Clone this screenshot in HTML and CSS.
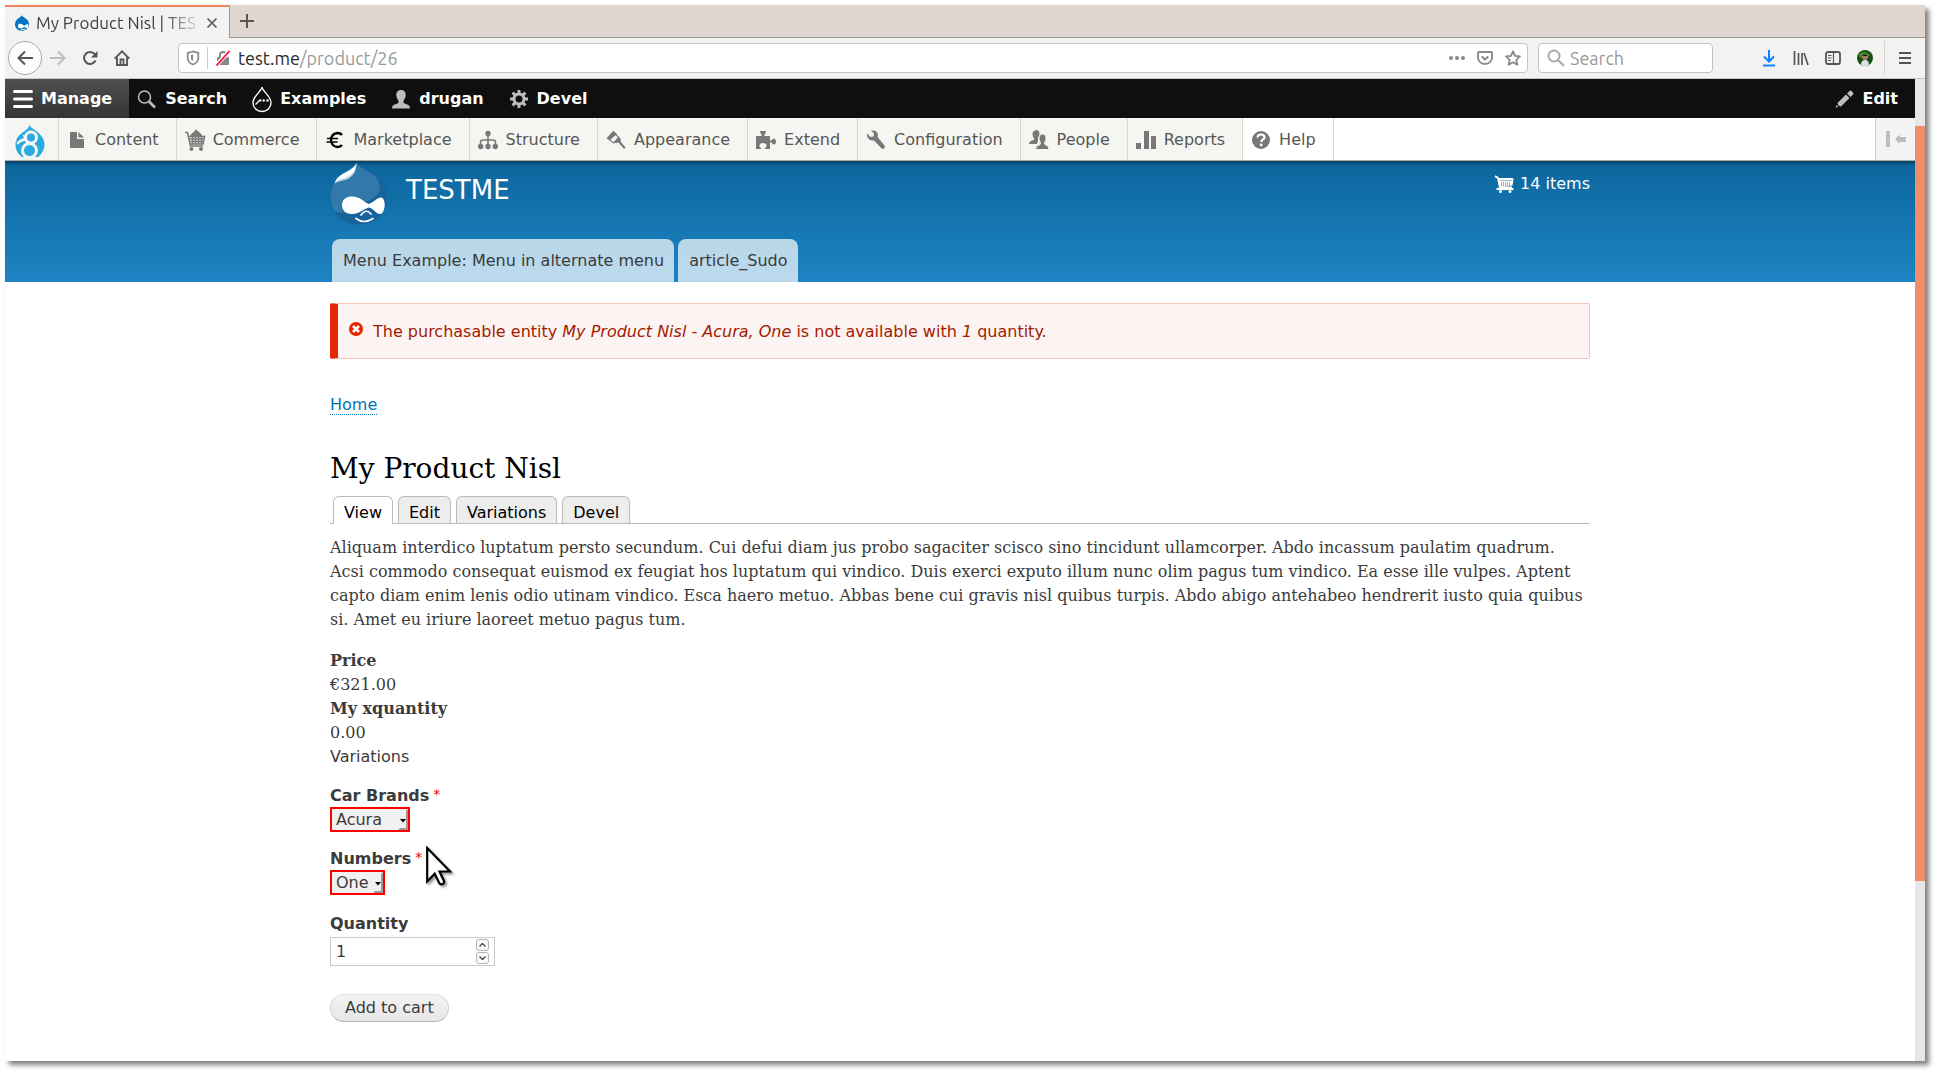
FILE: index.html
```html
<!DOCTYPE html>
<html lang="en">
<head>
  <meta charset="UTF-8">
  <title>My Product Nisl | TESTME</title>
  <meta name="viewport" content="width=device-width, initial-scale=1">
  <link rel="stylesheet" href="styles.css">
</head>
<body>
  <div class="window">

    <!-- browser tabs -->
    <div class="tabstrip">
      <div class="browser-tab">
        <svg class="favicon" width="14" height="16" viewBox="0 0 57 64"><path d="M27 0C31 7 42 10 49 18C55 25 57 31 57 37C57 52 44 64 28 64C12 64 0 52 0 37C0 26 7 18 15 12C21 8 25 5 27 0Z" fill="#0077c0"/><path d="M12 44c0-7 5-9 9-9 8 0 12 6 17 8 5-1 9-8 13-7s5 16 0 17-8-5-12-5-9 6-17 6c-6 0-10-4-10-10z" fill="#fff"/><path d="M24 57q8 5 18-1" fill="none" stroke="#fff" stroke-width="4"/></svg>
        <span class="tab-title">My Product Nisl | TES</span>
        <button class="plain" aria-label="Close tab"><svg width="12" height="12" viewBox="0 0 12 12"><path d="M1.500 1.500l9 9M10.500 1.500l-9 9" stroke="#555" stroke-width="1.600"/></svg></button>
      </div>
      <button class="plain new-tab" aria-label="New tab"><svg width="14" height="14" viewBox="0 0 14 14"><path d="M7 0v14M0 7h14" stroke="#5a5654" stroke-width="2"/></svg></button>
    </div>

    <!-- browser navigation -->
    <div class="navbar">
      <button class="plain back" aria-label="Back"><svg width="16" height="16" viewBox="0 0 16 16"><path d="M16 8H1.500M8 1.500L1.500 8 8 14.500" fill="none" stroke="#555" stroke-width="2"/></svg></button>
      <button class="plain nav-icon" aria-label="Forward"><svg width="16" height="16" viewBox="0 0 16 16"><path d="M0 8h14.500M8 1.500L14.500 8 8 14.500" fill="none" stroke="#bbb" stroke-width="2"/></svg></button>
      <button class="plain nav-icon" aria-label="Reload"><svg width="16" height="16" viewBox="0 0 16 16"><path d="M13 4.500A6 6 0 1 0 13.500 10.500" fill="none" stroke="#555" stroke-width="2"/><path d="M15.500 1v6.500H9z" fill="#555"/></svg></button>
      <button class="plain nav-icon" aria-label="Home"><svg width="16" height="16" viewBox="0 0 16 16"><path d="M0.700 8.700L8 1.400l7.300 7.300M3 7.500V15h10V7.500" fill="none" stroke="#555" stroke-width="1.900"/><path d="M6.500 14V9.500h3V14" fill="none" stroke="#555" stroke-width="1.800"/></svg></button>

      <div class="urlbar">
        <svg width="14" height="16" viewBox="0 0 14 16"><path d="M7 1.500L1.700 2.800V8c0 3.500 2.500 5.500 5.300 6.500 2.800-1 5.300-3 5.300-6.500V2.800z" fill="none" stroke="#888" stroke-width="1.700"/><path d="M7 4.500L5 5v3c0 1.500.8 2.500 2 3z" fill="#888"/></svg>
        <span class="url-sep"></span>
        <svg width="16" height="16" viewBox="0 0 16 16"><path d="M5 8V5a3 3 0 0 1 6 0v3" fill="none" stroke="#888" stroke-width="2"/><rect x="2" y="7" width="12" height="8" rx="1" fill="#888"/><path d="M1.500 15L14.500 1" stroke="#fff" stroke-width="4"/><path d="M1.500 15.500L14.500 1" stroke="#ff0f3f" stroke-width="1.800"/></svg>
        <span class="url"><b>test.me</b>/product/26</span>
        <svg width="16" height="16" viewBox="0 0 16 16"><g fill="#888"><circle cx="2" cy="8" r="2"/><circle cx="8" cy="8" r="2"/><circle cx="14" cy="8" r="2"/></g></svg>
        <svg width="16" height="16" viewBox="0 0 16 16"><path d="M2 2h12a1 1 0 0 1 1 1v4.500a7 6.500 0 0 1-14 0V3a1 1 0 0 1 1-1z" fill="none" stroke="#888" stroke-width="1.900"/><path d="M4.700 6.500L8 9.500l3.300-3" fill="none" stroke="#888" stroke-width="1.900"/></svg>
        <svg width="16" height="16" viewBox="0 0 16 16"><path d="M8 1.300l2 4.600 5 .5-3.700 3.400 1 4.900L8 12.200l-4.300 2.500 1-4.900L1 6.400l5-.5z" fill="none" stroke="#888" stroke-width="1.800" stroke-linejoin="round"/></svg>
      </div>

      <div class="searchbar">
        <svg width="18" height="18" viewBox="0 0 18 18"><circle cx="7" cy="7" r="5.500" fill="none" stroke="#aaa" stroke-width="2"/><path d="M11 11l6 6" stroke="#aaa" stroke-width="2.200"/></svg>
        <input type="text" placeholder="Search" aria-label="Search the web">
      </div>

      <div class="chrome-tools">
        <svg width="16" height="18" viewBox="0 0 16 18"><path d="M8 1v11M3 7.500l5 5 5-5M2 16.500h12" fill="none" stroke="#0a84ff" stroke-width="2"/></svg>
        <svg width="16" height="16" viewBox="0 0 16 16"><path d="M1.500 1v14M5.500 3v12M9 3v12M11 3l4 12" fill="none" stroke="#555" stroke-width="1.700"/></svg>
        <svg width="16" height="16" viewBox="0 0 16 16"><rect x="1" y="2" width="14" height="12" rx="2" fill="none" stroke="#555" stroke-width="1.800"/><path d="M8.500 2v12M3 5.500h3.500M3 8h3.500M3 10.500h3" stroke="#555" stroke-width="1.200"/></svg>
        <svg width="16" height="16" viewBox="0 0 16 16"><circle cx="8" cy="8" r="8" fill="#174f14"/><path d="M1 5q3-4 7-3t5 4l-4 1-5 1z" fill="#3e8a20"/><circle cx="8" cy="7" r="3" fill="#a77a66"/><path d="M5.300 6a3 3 0 0 1 5.400 0z" fill="#1f1612"/><path d="M4 14.900q0-4.900 4-4.900t4 4.900q-4 2-8 0z" fill="#d7e3f0"/></svg>
      </div>
      <button class="plain app-menu" aria-label="Menu"><svg width="12" height="12" viewBox="0 0 12 12"><path d="M0 1h12M0 6h12M0 11h12" stroke="#555" stroke-width="2"/></svg></button>
    </div>

    <div class="viewport">
      <div class="page">

        <!-- admin toolbar -->
        <nav class="toolbar-bar">
          <a class="bar-item active" href="#"><svg width="20" height="18" viewBox="0 0 20 18"><path d="M1.500 1.500h17M1.500 9h17M1.500 16.500h17" stroke="#fff" stroke-width="3" stroke-linecap="round"/></svg>Manage</a>
          <a class="bar-item" href="#"><svg width="20" height="20" viewBox="0 0 20 20"><circle cx="7.500" cy="8" r="6" fill="none" stroke="#bebebe" stroke-width="1.500"/><path d="M12 12.500l6 6" stroke="#bebebe" stroke-width="2.600"/></svg>Search</a>
          <a class="bar-item" href="#"><svg width="22" height="28" viewBox="0 0 22 28"><path d="M11 2c0 4-9 9-9 15.500C2 23 6 26.500 11 26.500s9-3.500 9-9C20 11 11 6 11 2z" fill="none" stroke="#fff" stroke-width="1.400"/><path d="M4.500 19.500l5-5" stroke="#fff" stroke-width="1.200"/><circle cx="9.500" cy="15.500" r="1" fill="#fff"/><circle cx="12.700" cy="15.500" r="1.200" fill="#fff"/><circle cx="16.500" cy="15.500" r="1.200" fill="#fff"/></svg>Examples</a>
          <a class="bar-item" href="#"><svg width="20" height="20" viewBox="0 0 20 20"><path d="M10 1c3.500 0 5 2.500 4.600 6-.3 2.500-1.800 4-2.200 5.200-.3 1 .3 2 1.600 2.500 3.200 1 4.800 1.500 5 4.800H1c.2-3.300 1.800-3.800 5-4.800 1.300-.5 1.900-1.500 1.600-2.500C7.200 11 5.700 9.500 5.400 7 5 3.500 6.500 1 10 1z" fill="#bebebe"/></svg>drugan</a>
          <a class="bar-item" href="#"><svg width="20" height="20" viewBox="0 0 20 20"><circle cx="10" cy="10" r="5" fill="none" stroke="#bebebe" stroke-width="3"/><path d="M10 1v4M10 15v4M1 10h4M15 10h4M3.600 3.600l3 3M13.400 13.400l3 3M3.600 16.400l3-3M13.400 6.600l3-3" stroke="#bebebe" stroke-width="3"/></svg>Devel</a>
          <a class="bar-item edit" href="#"><svg width="20" height="20" viewBox="0 0 20 20"><path d="M1.500 18.500l1-2.500 2 2zM3.500 14L12 5.500l3.500 3.500L7 17.500l-2.500-1zM13 4.500L15.500 2q1-1 2 0L19 3.500q1 1 0 2L16.500 8z" fill="#bebebe"/></svg>Edit</a>
        </nav>

        <nav class="toolbar-tray">
          <a class="tray-item home" href="#" aria-label="Drupal"><svg width="30" height="32" viewBox="0 0 30 32"><clipPath id="drop"><path d="M14.500 0c1 3 5.500 4.500 9.500 8.500 4 4 5.500 7 5.500 11 0 5-3 10-6.500 12.500H7C3 29 .5 25 .5 19.500c0-5 2.500-8.500 6.500-11.500C10 5.500 13.500 4 14.500 0z"/></clipPath><g clip-path="url(#drop)"><rect width="30" height="32" fill="#2ba9e0"/><path d="M1 14q3-4 8-4l3 6q-7 0-9 4-2-2-2-6z" fill="#f5f6f1"/><circle cx="16" cy="12.500" r="5.500" fill="none" stroke="#f5f6f1" stroke-width="3"/><circle cx="14.500" cy="25.500" r="7" fill="none" stroke="#f5f6f1" stroke-width="3"/><path d="M1 14q1-4 6-5l2 4q-5 1-7 5z" fill="#2ba9e0"/></g></svg></a>
          <a class="tray-item" href="#"><svg width="20" height="20" viewBox="0 0 20 20"><path d="M3 2h7v7h7v9H3zM11.500 2L17 7.500h-5.500z" fill="#787878"/></svg>Content</a>
          <a class="tray-item" href="#"><svg width="20" height="22" viewBox="0 0 20 22"><path d="M11 0c1 2.500 6 3.500 6.500 8H5C5.500 4 10 3 11 0z" fill="#787878"/><path d="M0 3.500h2.500L5.500 17H18M3 7.500h16.500L18 15H5" fill="none" stroke="#787878" stroke-width="1.600"/><path d="M5 10h13.500M5.500 12.500h13M7.500 8v7M10.500 8v7M13.500 8v7M16.500 8v7" stroke="#787878" stroke-width="1.400"/><circle cx="6.500" cy="20" r="2" fill="#787878"/><circle cx="16" cy="20" r="2" fill="#787878"/></svg>Commerce</a>
          <a class="tray-item" href="#"><svg width="20" height="20" viewBox="0 0 20 20"><path d="M17 5Q15.500 3 12.500 3 6.500 3.500 6 10q.5 6.500 6.500 7 3 0 4.500-2" fill="none" stroke="#000" stroke-width="2.300"/><path d="M2 8.500h11M1.500 12h11" stroke="#000" stroke-width="1.700"/></svg>Marketplace</a>
          <a class="tray-item" href="#"><svg width="20" height="20" viewBox="0 0 20 20"><path d="M10 4v12M2.500 16v-3.500Q2.500 10 5 10h10q2.500 0 2.500 2.500V16" fill="none" stroke="#787878" stroke-width="1.600"/><g fill="#787878"><circle cx="10" cy="3.500" r="2.700"/><circle cx="2.700" cy="16.500" r="2.700"/><circle cx="10" cy="16.500" r="2.700"/><circle cx="17.300" cy="16.500" r="2.700"/></g></svg>Structure</a>
          <a class="tray-item" href="#"><svg width="20" height="20" viewBox="0 0 20 20"><path d="M7 2L1.500 8.500 8 13l5-5.500z" fill="none" stroke="#787878" stroke-width="1.200"/><path d="M7.500 1L1 8l3 2 7-6zM12 7l-4 5 2.500 1 2-.5 5.500 6.500 1.500-1.500-5-6 .5-2.500z" fill="#787878"/></svg>Appearance</a>
          <a class="tray-item" href="#"><svg width="22" height="20" viewBox="0 0 22 20"><path d="M1 6h5.500V4.500Q5 3.500 5 1h6q0 2.500-1.500 3.500V6H15v4.500h1.500q1-2 2.500-2 2 .5 2 3t-2 3q-1.500 0-2.500-2H15V19h-5v-1q2-1 1.500-3T8 13t-3.500 2T6 18v1H1z" fill="#787878"/></svg>Extend</a>
          <a class="tray-item" href="#"><svg width="20" height="20" viewBox="0 0 20 20"><path d="M1 3.500L4.500 7l3-.5.5-3L5 .8q4-1 6 1.500 1.500 2.200.7 5l6.800 8.200q1 1.500-.3 2.800-1.500 1.200-2.800 0L8 10.500Q5 11 3 9.300.5 7 1 3.500z" fill="#787878"/></svg>Configuration</a>
          <a class="tray-item" href="#"><svg width="22" height="21" viewBox="0 0 22 21"><path d="M8 1q3.500 0 3.500 4 0 2-1.500 3.500V12l-1 3H1q0-3 4.500-4 .8-.5.8-1.500Q4.500 8 4.500 5T8 1z" fill="#787878"/><path d="M14.500 5q3.500 0 3.500 4.500 0 2.500-1.500 4v1q0 1 1.500 1.500 3 .5 3 4.500H7.500q0-4 3.500-4.500 1.500-.5 1.500-1.500v-1Q11 12 11 9.500 11 5 14.500 5z" fill="#787878" stroke="#f5f6f1"/></svg>People</a>
          <a class="tray-item" href="#"><svg width="20" height="20" viewBox="0 0 20 20"><path d="M0 13h5v6H0zM8 1h5v18H8zM15 6h5v13h-5z" fill="#787878"/></svg>Reports</a>
          <a class="tray-item help" href="#"><svg width="20" height="20" viewBox="0 0 20 20"><circle cx="10" cy="10" r="9" fill="#787878"/><path d="M6.500 7.500q.2-3 3.500-3t3.500 2.700c0 2.300-3.200 2.300-3.200 4.800" fill="none" stroke="#fff" stroke-width="2.200"/><circle cx="10.200" cy="15" r="1.400" fill="#fff"/></svg>Help</a>
          <button class="plain orientation" aria-label="Vertical orientation"><svg width="20" height="16" viewBox="0 0 20 16"><path d="M0 0h4v16H0zM9 8l4.500-4.500V6H20v5h-6.500v2z" fill="#bebebe"/></svg></button>
        </nav>

        <!-- site header -->
        <header class="site-header">
          <div class="container">
            <div class="branding">
              <a class="logo" href="#" aria-label="Home page"><svg width="57" height="64" viewBox="0 0 57 64"><path d="M26.500 0C29 6 40 9 47 16C54 22 57 28 57 36C57 52 45 63.500 28.500 63.500C12 63.500 0 51 0 36C0 26 4 20 11 15C19 10 26 7 26.500 0Z" fill="#17639a"/><path d="M26.500 1C29 7 38 9 45 15C52 23 52 34 40 39L34 41C28 35 14 34 12 44C11 48 13 51 15 52L5 51C2 47 .5 41 .5 36C.5 26 5 20 11 15C20 10 26 7 26.500 1Z" fill="#3079a9"/><path d="M26.500 1C27 7 25 14 18 18C12 20 8 20 4 23C8 15 15 13 20 9C24 6 26 4 26.500 1Z" fill="#bfd4e4"/><path d="M26 3C26 10 22 14 15 17C11 18 8 19 5 21C7 16 12 13 18 10C23 7 25 5 26 3Z" fill="#fff"/><path d="M12 44C12 38 17 35.500 22 35.500C30 35.500 34 41 38.500 43C43 42 47 36.500 51 36.500C56 37 56 50 51 53C47 54 43 47 39 46.500C35 47 30 53 22 53C15 53 12 49 12 44Z" fill="#fff"/><path d="M31 54q5-7 10-1M26 57.500q8 6 17 0" fill="none" stroke="#fff" stroke-width="1.700" stroke-linecap="round"/></svg></a>
              <a class="site-name" href="#">TESTME</a>
              <a class="cart" href="#"><svg width="20" height="18" viewBox="0 0 20 18"><path d="M1 1.200L4 3l2 9.500H18" fill="none" stroke="#fff" stroke-width="2"/><path d="M4 3h14.500l1 1-1 6.500-12 1.500z" fill="#fff"/><path d="M6.500 5.500h11M7 8h10M7 10h9" stroke="#1370aa" stroke-dasharray="1 1"/><path d="M2.500 14h17" stroke="#fff" stroke-width="2.200"/><circle cx="6.500" cy="16.500" r="1.500" fill="#fff"/><circle cx="16" cy="16.500" r="1.500" fill="#fff"/></svg>14 items</a>
            </div>
            <nav class="main-menu">
              <a href="#">Menu Example: Menu in alternate menu</a>
              <a href="#">article_Sudo</a>
            </nav>
          </div>
        </header>

        <main class="container content">
          <div class="message-error" role="alert">
            <svg width="14" height="14" viewBox="0 0 14 14"><circle cx="7" cy="7" r="7" fill="#e32700"/><path d="M4 4l6 6M10 4l-6 6" stroke="#fff" stroke-width="2.600"/></svg>
            <p>The purchasable entity <em>My Product Nisl - Acura, One</em> is not available with <em>1</em> quantity.</p>
          </div>

          <div class="breadcrumb"><a href="#">Home</a></div>

          <h1>My Product Nisl</h1>
          <div class="tabs">
            <a class="is-active" href="#">View</a>
            <a href="#">Edit</a>
            <a href="#">Variations</a>
            <a href="#">Devel</a>
          </div>

          <p class="product-body">Aliquam interdico luptatum persto secundum. Cui defui diam jus probo sagaciter scisco sino tincidunt ullamcorper. Abdo incassum paulatim quadrum. Acsi commodo consequat euismod ex feugiat hos luptatum qui vindico. Duis exerci exputo illum nunc olim pagus tum vindico. Ea esse ille vulpes. Aptent capto diam enim lenis odio utinam vindico. Esca haero metuo. Abbas bene cui gravis nisl quibus turpis. Abdo abigo antehabeo hendrerit iusto quia quibus si. Amet eu iriure laoreet metuo pagus tum.</p>

          <dl class="fields">
            <dt>Price</dt>
            <dd>€321.00</dd>
            <dt>My xquantity</dt>
            <dd>0.00</dd>
          </dl>
          <div class="variations">Variations</div>

          <form class="add-to-cart">
            <div class="form-item">
              <label class="required" for="brand">Car Brands</label>
              <select class="brand" id="brand"><option>Acura</option></select>
            </div>
            <div class="form-item">
              <label class="required" for="numbers">Numbers</label>
              <select class="numbers" id="numbers"><option>One</option></select>
            </div>
            <div class="form-item quantity">
              <label for="quantity">Quantity</label>
              <div class="number-field">
                <input type="number" id="quantity" value="1">
                <div class="spinner">
                  <button type="button" aria-label="Increase"><svg width="7" height="4" viewBox="0 0 7 4"><path d="M.5 3.500l3-3 3 3" fill="none" stroke="#444" stroke-width="1.300"/></svg></button>
                  <button type="button" aria-label="Decrease"><svg width="7" height="4" viewBox="0 0 7 4"><path d="M.5.500l3 3 3-3" fill="none" stroke="#444" stroke-width="1.300"/></svg></button>
                </div>
              </div>
            </div>
            <button class="submit" type="button">Add to cart</button>
          </form>
        </main>
      </div>

      <div class="scrollbar"><div class="thumb"></div></div>
    </div>
  </div>

  <svg class="pointer" width="28" height="42" viewBox="0 0 28 42"><path d="M1.200 2v33.500l7.500-7.800 4.500 9.300q1.500 2 3.500 1 2-1.200 1.300-3l-4.500-9.500h10.500z" fill="#fff" stroke="#000" stroke-width="2.200"/></svg>
</body>
</html>
```
FILE: styles.css
```css
* { box-sizing: border-box; }
body {
  margin: 0;
  padding: 5px 9px 9px 5px;
  min-height: 100vh;
  display: flex;
  background: #fff;
  color: #3b3b3b;
  font: 16px/24px "DejaVu Sans", sans-serif;
}
a { text-decoration: none; color: inherit; }
svg { display: block; flex: none; }
.plain {
  display: flex;
  align-items: center;
  justify-content: center;
  padding: 0;
  border: 0;
  background: none;
}
.window {
  flex: 1;
  min-width: 0;
  display: flex;
  flex-direction: column;
  box-shadow: 4px 4px 5px rgba(0,0,0,0.5);
}

/* browser chrome */
.tabstrip, .navbar { font-family: Ubuntu, "Noto Sans", sans-serif; }
.tabstrip {
  display: flex;
  height: 33px;
  background: #dfd6d0;
  border-bottom: 1px solid #9d9792;
}
.browser-tab {
  display: flex;
  align-items: center;
  width: 225px;
  height: 33px;
  padding: 0 11px 0 10px;
  background: #f4f2f1;
  border-top: 2px solid #ee8660;
  border-right: 1px solid #9d9792;
}
.tab-title {
  flex: 1;
  margin-left: 7px;
  white-space: nowrap;
  font-size: 17px;
  color: #3f3f3f;
  -webkit-mask-image: linear-gradient(to right, #000 75%, transparent 98%);
  mask-image: linear-gradient(to right, #000 75%, transparent 98%);
}
.new-tab { width: 34px; }
.navbar {
  display: flex;
  align-items: center;
  height: 41px;
  background: #f4f2f1;
  border-bottom: 1px solid #c9c5c2;
}
.back {
  width: 34px;
  height: 34px;
  margin: 0 8px 0 3px;
  border: 1px solid #aaa;
  border-radius: 50%;
  background: #fdfdfd;
}
.nav-icon { width: 16px; margin-right: 16px; }
.urlbar, .searchbar {
  display: flex;
  align-items: center;
  height: 30px;
  background: #fff;
  border: 1px solid #c6c3c0;
  border-radius: 4px;
  font-size: 18px;
}
.urlbar {
  flex: 1;
  gap: 12px;
  margin-left: 32px;
  padding: 0 6px 0 7px;
}
.url-sep { width: 1px; height: 22px; margin: 0 -5px; background: #ccc; }
.url { flex: 1; margin-left: -5px; color: #999; }
.url b { font-weight: normal; color: #2b2b2b; }
.searchbar {
  width: 175px;
  margin-left: 10px;
  padding: 0 8px;
}
.searchbar input {
  width: 100%;
  border: 0;
  padding: 0 5px;
  background: none;
  font: inherit;
}
.searchbar input::placeholder { color: #999; }
.chrome-tools { display: flex; align-items: center; gap: 16px; margin: 0 11px 0 48px; }
.app-menu { width: 41px; height: 34px; border-left: 1px solid #d5d2cf; }

.viewport { flex: 1; display: flex; }
.page { flex: 1; min-width: 0; overflow: hidden; background: #fff; }
.scrollbar { width: 10px; background: #e6e6e6; padding-top: 47px; }
.thumb { height: 755px; background: #ef8e68; }

/* admin toolbar */
.toolbar-bar {
  position: relative;
  z-index: 2;
  display: flex;
  height: 39px;
  background: #0f0f0f;
  color: #fff;
  font-weight: bold;
}
.bar-item, .tray-item { display: flex; align-items: center; }
.bar-item { padding-right: 17px; }
.bar-item svg, .tray-item svg { width: 36px; }
.bar-item.active { background: linear-gradient(#505050, #343434); }
.edit { margin-left: auto; }
.toolbar-tray {
  position: relative;
  display: flex;
  height: 43px;
  background: #fff;
  border-bottom: 1px solid #a9aba5;
  box-shadow: 0 1px 5px rgba(0,0,0,0.6);
  color: #565656;
}
.tray-item {
  padding: 1px 17px 0 0;
  background: #f5f6f1;
  border-right: 1px solid #d6d6d4;
}
.tray-item.home { padding: 3px 13px 0 10px; }
.tray-item.home svg { width: 30px; }
.tray-item.help { background: #fff; }
.orientation {
  width: 40px;
  margin-left: auto;
  background: #f4f4f4;
  border-left: 1px solid #c9c9c9;
}

/* site header */
.container { max-width: 1290px; margin: 0 auto; padding: 0 15px; }
.site-header { background: linear-gradient(#0c669d, #1d84c3); }
.branding { display: flex; height: 78px; color: #fff; }
.site-name { margin: 17px 0 0 19px; font-size: 26px; }
.cart { display: flex; gap: 6px; margin: 11px 0 0 auto; }
.cart svg { margin-top: 3px; }
.main-menu { display: flex; gap: 4px; padding-left: 2px; }
.main-menu a {
  padding: 10px 10px 9px 11px;
  background: rgba(255,255,255,0.7);
  border-radius: 8px 8px 0 0;
}

/* content */
.message-error {
  display: flex;
  align-items: center;
  gap: 10px;
  height: 56px;
  margin-top: 21px;
  padding-left: 11px;
  background: #fcf4f2;
  border: 1px solid #f5c5bb;
  border-left: 8px solid #e62600;
  border-radius: 2px;
  color: #a51b00;
}
.message-error svg { margin-bottom: 4px; }
.message-error p { margin: 0; padding-top: 2px; }
.breadcrumb { margin-top: 34px; }
.breadcrumb a { color: #0074b8; border-bottom: 1px dotted #0074b8; }
h1 {
  margin: 34px 0 9px;
  color: #000;
  font: 28px/36px "DejaVu Serif", serif;
}
.tabs {
  display: flex;
  gap: 5px;
  padding-left: 3px;
  border-bottom: 1px solid #bbb;
}
.tabs a {
  height: 27px;
  padding: 3px 10px 0;
  background: #ededed;
  border: 1px solid #bbb;
  border-bottom: 0;
  border-radius: 6px 6px 0 0;
  color: #000;
  line-height: 26px;
}
.tabs .is-active { margin-bottom: -1px; height: 28px; background: #fff; }
.product-body, .fields { font-family: "DejaVu Serif", serif; }
.product-body { margin: 12px 0 17px; }
.fields { margin: 0; }
.fields dt { font-weight: bold; }
.fields dd { margin: 0; }
.add-to-cart { padding-bottom: 36px; }
.form-item { margin-top: 15px; }
.form-item label { display: block; line-height: 23px; font-weight: bold; }
.required::after {
  content: "*";
  margin-left: 4px;
  color: #e00;
  font-weight: normal;
  font-size: 14px;
  line-height: 0;
  vertical-align: 2px;
}
select {
  display: block;
  appearance: none;
  height: 25px;
  padding: 0 4px;
  border: 2px solid #f00;
  border-radius: 0;
  background:
    url('data:image/svg+xml,<svg xmlns="http://www.w3.org/2000/svg" width="10" height="21"><path d="M2 10h6l-3 3.500z"/><path d="M0 21l2-2h6V2l2-2v21z" fill="%23999"/></svg>') right bottom no-repeat #f2f1f0;
  color: #3b3b3b;
  font: inherit;
  line-height: 21px;
}
.brand { width: 80px; }
.numbers { width: 55px; }
.form-item.quantity { margin-top: 17px; }
.number-field {
  display: flex;
  align-items: center;
  width: 165px;
  height: 29px;
  margin-top: 2px;
  padding-right: 5px;
  border: 1px solid #ccc;
}
.number-field input {
  flex: 1;
  min-width: 0;
  padding: 0 5px;
  border: 0;
  background: none;
  color: #3b3b3b;
  font: inherit;
  appearance: textfield;
}
.spinner { display: flex; flex-direction: column; gap: 1px; }
.spinner button {
  display: flex;
  align-items: center;
  justify-content: center;
  width: 13px;
  height: 12px;
  padding: 0;
  background: #fafafa;
  border: 1px solid #b5b5b5;
  border-radius: 3px;
}
.submit {
  height: 28px;
  margin-top: 28px;
  padding: 0 14px;
  background: linear-gradient(#f3f3f3, #e7e7e7);
  border: 1px solid #e4e4e4;
  border-bottom-color: #b4b4b4;
  border-left-color: #d2d2d2;
  border-right-color: #d2d2d2;
  border-radius: 14px;
  color: #3a3a3a;
  font: inherit;
}

/* mouse pointer floating over the page */
.pointer {
  position: absolute;
  left: 426px;
  top: 846px;
  filter: drop-shadow(2px 2px 1px rgba(0,0,0,0.4));
}
```
